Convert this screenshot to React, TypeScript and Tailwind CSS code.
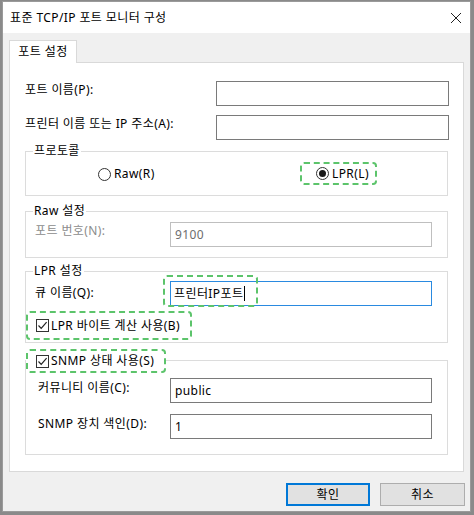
const font = "font-['Segoe_UI','Noto_Sans','Noto_Sans_CJK_KR',sans-serif]";

function Radio({ checked, label }: { checked?: boolean; label: string }) {
  return (
    <div className="flex items-center gap-[3px]">
      <span className="w-[13px] h-[13px] rounded-full border border-[#333] bg-white flex items-center justify-center">
        {checked && <span className="w-[7px] h-[7px] rounded-full bg-[#1a1a1a]" />}
      </span>
      <span className="leading-[16px]">{label}</span>
    </div>
  );
}

function Check({ label }: { label: string }) {
  return (
    <div className="flex items-center gap-[2px]">
      <span className="w-[13px] h-[13px] border border-[#333] bg-white flex items-center justify-center">
        <svg width="11" height="11" viewBox="0 0 11 11" fill="none">
          <path d="M1.5 5.5 L4.2 8.3 L9.6 2.2" stroke="#222" strokeWidth="1.2" />
        </svg>
      </span>
      <span className="leading-[16px]">{label}</span>
    </div>
  );
}

function Field({ value, className = "", disabled, focused }: { value?: string; className?: string; disabled?: boolean; focused?: boolean }) {
  const border = focused ? "border-[#2a8ae0]" : disabled ? "border-[#bfbfbf]" : "border-[#7a7a7a]";
  return (
    <div className={`h-[25px] bg-white border ${border} flex items-center pl-[4px] ${disabled ? "text-[#6d6d6d]" : "text-black"} ${className}`}>
      {value}
    </div>
  );
}

function Group({ title, heightClass, children, className = "" }: { title: React.ReactNode; heightClass: string; children?: React.ReactNode; className?: string }) {
  return (
    <div className={`relative border border-[#dcdcdc] w-[423px] ${heightClass} ${className}`}>
      {title}
      {children}
    </div>
  );
}

const dashed = "border-2 border-dashed border-[#5cc46b] rounded-[4px]";

export default function App() {
  return (
    <div className={`w-[474px] h-[515px] bg-[#8a8a8a] pl-[2px] pt-[1px] text-[12px] tracking-[0.4px] text-black ${font}`}>
      <div className="w-[469px] h-[511px] border border-[#9a9a9a] bg-[#f0f0f0] flex flex-col">
        {/* title bar */}
        <div className="h-[31px] bg-white flex items-center justify-between pl-[7px] pr-[7px] shrink-0">
          <span className="leading-[16px]">표준 TCP/IP 포트 모니터 구성</span>
          <svg width="12" height="12" viewBox="0 0 12 12" className="mr-[1px]">
            <path d="M1 1 L11 11 M11 1 L1 11" stroke="#222" strokeWidth="1" />
          </svg>
        </div>

        {/* tabs */}
        <div className="pl-[6px] pr-[6px] pt-[7px]">
          <div className="relative z-10 -mb-px w-[68px] h-[23px] bg-white border border-b-0 border-[#d9d9d9] flex items-center justify-center">
            <span className="leading-[16px]">포트 설정</span>
          </div>
          <div className="h-[410px] bg-white border border-[#d9d9d9] pl-[15px] pt-[18px]">
            <div className="flex items-start">
              <span className="w-[191px] leading-[16px] mt-[1px]">포트 이름(P):</span>
              <Field className="w-[233px]" />
            </div>
            <div className="flex items-start mt-[9px]">
              <span className="w-[191px] leading-[16px] mt-[1px]">프린터 이름 또는 IP 주소(A):</span>
              <Field className="w-[233px]" />
            </div>

            <Group
              heightClass="h-[45px]"
              className="mt-[11px] flex items-center"
              title={<span className="absolute -top-[9px] left-[7px] px-[1px] bg-white leading-[16px]">프로토콜</span>}
            >
              <div className="w-[274px] pl-[72px] pt-[1px]">
                <Radio label="Raw(R)" />
              </div>
              <div className={`${dashed} h-[23px] w-[77px] pl-[14px] flex items-center`}>
                <Radio checked label="LPR(L)" />
              </div>
            </Group>

            <Group
              heightClass="h-[47px]"
              className="mt-[15px] flex items-start pt-[10px] pl-[9px]"
              title={<span className="absolute -top-[9px] left-[7px] px-[1px] bg-white leading-[16px]">Raw 설정</span>}
            >
              <span className="w-[135px] leading-[16px] mt-[1px] text-[#8c8c8c]">포트 번호(N):</span>
              <Field disabled value="9100" className="w-[262px]" />
            </Group>

            <Group
              heightClass="h-[72px]"
              className="mt-[13px] pt-[9px]"
              title={<span className="absolute -top-[9px] left-[7px] px-[1px] bg-white leading-[16px]">LPR 설정</span>}
            >
              <div className="flex items-start pl-[9px]">
                <span className="w-[135px] leading-[16px] mt-[4px]">큐 이름(Q):</span>
                <div className="relative">
                  <Field focused className="w-[262px]" value="" />
                  <div className="absolute left-[4px] top-0 h-[25px] flex items-center">
                    <span className="leading-[16px]">프린터IP포트</span>
                    <span className="w-px h-[15px] bg-black ml-[1px]" />
                  </div>
                  <div className={`absolute -left-[7px] -top-[6px] w-[95px] h-[32px] ${dashed}`} />
                </div>
              </div>
              <div className={`${dashed} mt-[5px] w-[166px] h-[29px] pl-[8px] flex items-center`}>
                <Check label="LPR 바이트 계산 사용(B)" />
              </div>
            </Group>

            <Group
              heightClass="h-[95px]"
              className="mt-[17px] pt-[17px]"
              title={
                <div className={`absolute -top-[12px] left-0 bg-white ${dashed} w-[140px] h-[24px] pl-[8px] flex items-center`}>
                  <Check label="SNMP 상태 사용(S)" />
                </div>
              }
            >
              <div className="flex items-start pl-[12px]">
                <span className="w-[132px] leading-[16px] mt-[2px]">커뮤니티 이름(C):</span>
                <Field value="public" className="w-[262px]" />
              </div>
              <div className="flex items-start pl-[12px] mt-[11px]">
                <span className="w-[132px] leading-[16px] mt-[2px]">SNMP 장치 색인(D):</span>
                <Field value="1" className="w-[262px]" />
              </div>
            </Group>
          </div>
        </div>

        {/* buttons */}
        <div className="flex justify-end gap-[10px] pr-[5px] mt-[11px]">
          <button className="w-[84px] h-[23px] bg-[#e1e1e1] border-2 border-[#0078d7] leading-[16px]">확인</button>
          <button className="w-[85px] h-[23px] bg-[#e1e1e1] border border-[#adadad] leading-[16px]">취소</button>
        </div>
      </div>
    </div>
  );
}
